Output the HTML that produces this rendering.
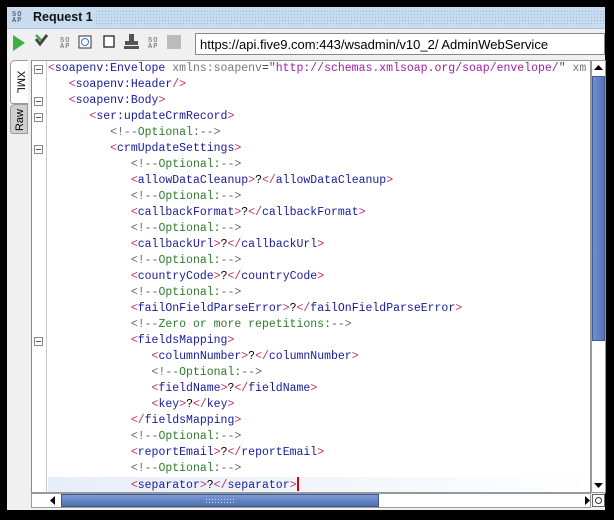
<!DOCTYPE html>
<html><head><meta charset="utf-8"><style>
*{margin:0;padding:0;box-sizing:border-box}
body{width:614px;height:520px;background:#000;position:relative;overflow:hidden;font-family:"Liberation Sans",sans-serif}
.win{position:absolute;left:7px;top:7px;width:598px;height:503px;background:#f0f0f0}
.title{position:absolute;left:0;top:0;width:598px;height:22px;background:#c8dcf0;border-bottom:1px solid #a8c0dc}
.dots{position:absolute;left:88px;top:3px;right:0;height:16px;background-image:radial-gradient(#9fb8d6 0.7px,transparent 0.8px);background-size:3px 3px}
.t{position:absolute;left:26px;top:3px;font-size:12.5px;font-weight:bold;color:#111}
.soap{position:absolute;font:bold 7px/6px "Liberation Mono",monospace;color:#888;letter-spacing:1px}
.url{position:absolute;left:188px;top:26px;width:410px;height:22px;background:#fff;border:1px solid #888;font-size:13px;padding:3px 4px;color:#000}
.ed{position:absolute;left:24px;top:53px;width:560px;height:433px;background:#fff;border:1px solid #999;border-left:1px solid #888;overflow:hidden}
.gut{position:absolute;left:0;top:0;width:15px;height:100%;border-right:1px solid #ccc;background:#fff}
.fb{position:absolute;left:2px;width:9px;height:9px;border:1px solid #888;background:#fff}
.fb:after{content:"";position:absolute;left:1px;top:3px;width:5px;height:1px;background:#555}
.code{position:absolute;left:16px;top:0;font:11.5px/16px "Liberation Mono",monospace}
.l{height:16px;white-space:pre}
.b{color:#c03060}.n{color:#1a1a9a}.c{color:#2e7a2e}.g{color:#666}.a{color:#777}.v{color:#a020a0}.q{color:#333}
.vs{position:absolute;left:584px;top:53px;width:15px;height:433px;background:#fff;border:1px solid #999}
.hs{position:absolute;left:24px;top:486px;width:560px;height:15px;background:#fff;border:1px solid #999}
</style></head><body>
<div class="win">
 <div class="title"><div class="soap" style="left:5px;top:5px;color:#667">SO<br>AP</div><div class="t">Request 1</div><div class="dots"></div></div>
 <svg style="position:absolute;left:0;top:24px" width="188" height="28">
  <polygon points="6,4 18,12 6,20" fill="#3cb043"/>
  <path d="M29,8 l4,5 l7,-9" stroke="#444" stroke-width="3" fill="none"/><path d="M29,4 l5,5" stroke="#3cb043" stroke-width="2.5"/>
  <rect x="72" y="5" width="12" height="12" fill="#fff" stroke="#333"/><circle cx="78" cy="11" r="3.5" fill="none" stroke="#4070c0"/>
  <rect x="97" y="5" width="10" height="11" fill="#fff" stroke="#222" stroke-width="1.3"/>
  <rect x="122" y="3" width="5" height="7" fill="#555"/><rect x="118" y="10" width="13" height="4" fill="#555"/><rect x="117" y="15" width="15" height="3" fill="#555"/>
  <rect x="160" y="4" width="14" height="14" fill="#bbb"/>
 </svg>
 <div class="soap" style="left:53px;top:31px">SO<br>AP</div>
 <div class="soap" style="left:141px;top:31px">SO<br>AP</div>
 <div class="url">https://api.five9.com:443/wsadmin/v10_2/ AdminWebService</div>
 <div style="position:absolute;left:3px;top:53px;width:18px;height:44px;background:#fff;border:1px solid #999;border-right:none;border-radius:5px 0 0 3px"><div style="position:absolute;left:-2px;top:15px;transform:rotate(90deg);font-size:11px">XML</div></div>
 <div style="position:absolute;left:3px;top:97px;width:18px;height:30px;background:#cfcfcf;border:1px solid #999;border-radius:5px 0 0 3px"><div style="position:absolute;left:-2px;top:9px;transform:rotate(-90deg);font-size:11px">Raw</div></div>
 <div class="ed">
  <div class="gut">
   <div class="fb" style="top:4px"></div><div class="fb" style="top:36px"></div><div class="fb" style="top:52px"></div><div class="fb" style="top:84px"></div><div class="fb" style="top:276px"></div>
  </div>
  <div style="position:absolute;left:16px;top:416px;width:545px;height:16px;background:linear-gradient(90deg,#e6eef8,#f6f9fd 70%,#fff)"></div>
  <div class="code"><div class="l"><span class="b">&lt;</span><span class="n">soapenv:Envelope</span> <span class="a">xmlns:soapenv</span><span class="q">=</span><span class="v">"http://schemas.xmlsoap.org/soap/envelope/"</span> <span class="a">xm</span></div><div class="l">   <span class="b">&lt;</span><span class="n">soapenv:Header</span><span class="b">/&gt;</span></div><div class="l">   <span class="b">&lt;</span><span class="n">soapenv:Body</span><span class="b">&gt;</span></div><div class="l">      <span class="b">&lt;</span><span class="n">ser:updateCrmRecord</span><span class="b">&gt;</span></div><div class="l">         <span class="g">&lt;!--</span><span class="c">Optional:</span><span class="g">--&gt;</span></div><div class="l">         <span class="b">&lt;</span><span class="n">crmUpdateSettings</span><span class="b">&gt;</span></div><div class="l">            <span class="g">&lt;!--</span><span class="c">Optional:</span><span class="g">--&gt;</span></div><div class="l">            <span class="b">&lt;</span><span class="n">allowDataCleanup</span><span class="b">&gt;</span>?<span class="b">&lt;/</span><span class="n">allowDataCleanup</span><span class="b">&gt;</span></div><div class="l">            <span class="g">&lt;!--</span><span class="c">Optional:</span><span class="g">--&gt;</span></div><div class="l">            <span class="b">&lt;</span><span class="n">callbackFormat</span><span class="b">&gt;</span>?<span class="b">&lt;/</span><span class="n">callbackFormat</span><span class="b">&gt;</span></div><div class="l">            <span class="g">&lt;!--</span><span class="c">Optional:</span><span class="g">--&gt;</span></div><div class="l">            <span class="b">&lt;</span><span class="n">callbackUrl</span><span class="b">&gt;</span>?<span class="b">&lt;/</span><span class="n">callbackUrl</span><span class="b">&gt;</span></div><div class="l">            <span class="g">&lt;!--</span><span class="c">Optional:</span><span class="g">--&gt;</span></div><div class="l">            <span class="b">&lt;</span><span class="n">countryCode</span><span class="b">&gt;</span>?<span class="b">&lt;/</span><span class="n">countryCode</span><span class="b">&gt;</span></div><div class="l">            <span class="g">&lt;!--</span><span class="c">Optional:</span><span class="g">--&gt;</span></div><div class="l">            <span class="b">&lt;</span><span class="n">failOnFieldParseError</span><span class="b">&gt;</span>?<span class="b">&lt;/</span><span class="n">failOnFieldParseError</span><span class="b">&gt;</span></div><div class="l">            <span class="g">&lt;!--</span><span class="c">Zero or more repetitions:</span><span class="g">--&gt;</span></div><div class="l">            <span class="b">&lt;</span><span class="n">fieldsMapping</span><span class="b">&gt;</span></div><div class="l">               <span class="b">&lt;</span><span class="n">columnNumber</span><span class="b">&gt;</span>?<span class="b">&lt;/</span><span class="n">columnNumber</span><span class="b">&gt;</span></div><div class="l">               <span class="g">&lt;!--</span><span class="c">Optional:</span><span class="g">--&gt;</span></div><div class="l">               <span class="b">&lt;</span><span class="n">fieldName</span><span class="b">&gt;</span>?<span class="b">&lt;/</span><span class="n">fieldName</span><span class="b">&gt;</span></div><div class="l">               <span class="b">&lt;</span><span class="n">key</span><span class="b">&gt;</span>?<span class="b">&lt;/</span><span class="n">key</span><span class="b">&gt;</span></div><div class="l">            <span class="b">&lt;/</span><span class="n">fieldsMapping</span><span class="b">&gt;</span></div><div class="l">            <span class="g">&lt;!--</span><span class="c">Optional:</span><span class="g">--&gt;</span></div><div class="l">            <span class="b">&lt;</span><span class="n">reportEmail</span><span class="b">&gt;</span>?<span class="b">&lt;/</span><span class="n">reportEmail</span><span class="b">&gt;</span></div><div class="l">            <span class="g">&lt;!--</span><span class="c">Optional:</span><span class="g">--&gt;</span></div><div class="l">            <span class="b">&lt;</span><span class="n">separator</span><span class="b">&gt;</span>?<span class="b">&lt;/</span><span class="n">separator</span><span class="b">&gt;</span><span style="display:inline-block;width:2px;height:14px;background:#d00;vertical-align:-3px"></span></div></div>
 </div>
 <div class="vs">
  <svg width="13" height="14" style="position:absolute;top:0;left:0"><polygon points="2,9 11,9 6.5,4" fill="#000"/></svg>
  <div style="position:absolute;left:0;top:15px;width:13px;height:265px;background:linear-gradient(90deg,#6f8fcf,#5675b5);border:1px solid #3d5a95"></div>
  <svg width="13" height="14" style="position:absolute;bottom:0;left:0"><polygon points="2,5 11,5 6.5,10" fill="#000"/></svg>
 </div>
 <div class="hs">
  <svg width="14" height="13" style="position:absolute;left:14px;top:0"><polygon points="9,2 9,11 4,6.5" fill="#000"/></svg>
  <div style="position:absolute;left:29px;top:0;width:318px;height:13px;background:linear-gradient(#7b9ad6,#4f6fae);border:1px solid #3d5a95"><div style="position:absolute;left:143px;top:3px;width:30px;height:6px;background-image:radial-gradient(#c8d6f0 0.7px,transparent 0.8px);background-size:3px 3px"></div></div>
  <svg width="14" height="13" style="position:absolute;left:548px;top:0"><polygon points="5,2 5,11 10,6.5" fill="#000"/></svg>
 </div>
 <div style="position:absolute;left:585px;top:487px;width:13px;height:13px;border:1px solid #666;background:#fff"><div style="position:absolute;left:2px;top:2px;width:7px;height:7px;border:1.5px solid #333;border-radius:50%"></div></div>
</div>
</body></html>
